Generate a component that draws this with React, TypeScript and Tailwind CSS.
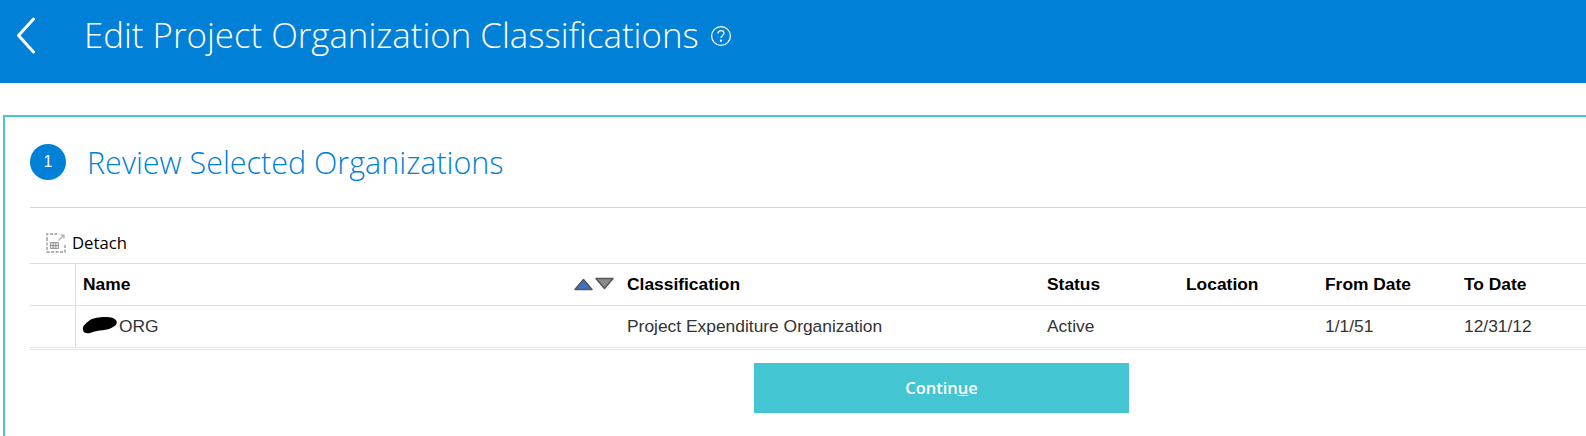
import React from "react";

const cellHead = "text-[17.4px] font-bold text-black";
const cellBody = "text-[17.4px] text-[#333]";
const sans = "font-['Liberation_Sans',Arial,sans-serif]";
const light = "font-['Open_Sans','Noto_Sans',sans-serif]";

const columns = [
  { name: "Classification", value: "Project Expenditure Organization", width: "w-[420px]" },
  { name: "Status", value: "Active", width: "w-[139px]" },
  { name: "Location", value: "", width: "w-[139px]" },
  { name: "From Date", value: "1/1/51", width: "w-[139px]" },
  { name: "To Date", value: "12/31/12", width: "w-[122px]" },
];

const SortIcons = () => (
  <svg width="40" height="14" viewBox="0 0 40 14" className="mr-[13px] shrink-0">
    <path d="M1 12.5 L9.5 2.5 L18 12.5 Z" fill="#4470c4" stroke="#555" strokeWidth="1.5" strokeLinejoin="round" />
    <path d="M22 1.5 L39 1.5 L30.5 11.5 Z" fill="#8b8b8b" stroke="#555" strokeWidth="1.5" strokeLinejoin="round" />
  </svg>
);

const DetachIcon = () => (
  <svg width="20" height="20" viewBox="0 0 20 20" className="shrink-0">
    <path d="M1 7 V1 H11 M19 12 V19 H1 V7" fill="none" stroke="#999" strokeWidth="1.4" strokeDasharray="3 1.5" />
    <path d="M12.5 7.5 L18 2 M14.5 2 H18 V5.5" fill="none" stroke="#aaa" strokeWidth="1.1" />
    <path d="M4.5 9.5 H12.5 V15.5 H4.5 Z M4.5 12.5 H12.5 M7.2 9.5 V15.5 M9.8 9.5 V15.5" fill="#e4e4e4" stroke="#888" strokeWidth="0.8" />
  </svg>
);

export default function App() {
  return (
    <div className="w-[1586px] h-[436px] overflow-hidden bg-white">
      <header className="h-[83px] bg-[#0080d6] flex items-start text-white">
        <svg width="20" height="37" viewBox="0 0 20 37" className="ml-[16px] mt-[17px] shrink-0" fill="none" stroke="white" strokeWidth="3" strokeLinecap="round" strokeLinejoin="round">
          <path d="M17.5 2 L2.5 18.5 L17.5 35" />
        </svg>
        <h1 className={`${light} ml-[48px] mt-[11px] text-[34.85px] leading-[48px] font-light`}>
          Edit Project Organization Classifications
        </h1>
        <svg width="22" height="22" viewBox="0 0 22 22" className="ml-[11px] mt-[25px] shrink-0" fill="none" stroke="white" strokeWidth="1.2">
          <circle cx="11" cy="11" r="9.4" />
          <path d="M8 8.6 C8 6.6 9.4 5.7 11 5.7 C12.7 5.7 14 6.7 14 8.3 C14 10.4 11 10.6 11 13" />
          <circle cx="11" cy="15.6" r="0.6" fill="white" />
        </svg>
      </header>

      <section className="mt-[32px] ml-[3px] h-[321px] border-l-2 border-t-2 border-[#45c6d3] pl-[25px]">
        <div className="h-[90px] flex items-center">
          <div className={`${sans} w-[36px] h-[36px] rounded-full bg-[#0080d6] text-white text-[16px] flex items-center justify-center shrink-0`}>
            1
          </div>
          <h2 className={`${light} ml-[21px] text-[30.5px] font-light text-[#0080d6] leading-[40px] -mt-[1px]`}>
            Review Selected Organizations
          </h2>
        </div>
        <div className="border-t border-[#d5d5d5] h-[56px] flex items-center pl-[16px] pt-[14px]">
          <DetachIcon />
          <span className={`${light} ml-[6px] text-[16.7px] text-black`}>Detach</span>
        </div>

        <div className={`${sans} border-t border-[#d6dfe6]`}>
          <div className="flex h-[42px] items-center border-b border-[#d6dfe6]">
            <div className="w-[46px] h-full border-r border-[#d6dfe6] shrink-0" />
            <div className="w-[551px] pl-[7px] flex items-center justify-between shrink-0">
              <span className={cellHead}>Name</span>
              <SortIcons />
            </div>
            {columns.map((c) => (
              <div key={c.name} className={`${c.width} shrink-0 ${cellHead}`}>
                {c.name}
              </div>
            ))}
          </div>
          <div className="flex h-[41px] items-center">
            <div className="w-[46px] h-full border-r border-[#d6dfe6] shrink-0" />
            <div className="w-[551px] pl-[6px] flex items-center shrink-0">
              <svg width="36" height="18" viewBox="0 0 36 18" className="shrink-0 -mt-[2px]">
                <path d="M1 14 C0 10 4 7 8 4 C13 1 25 0 31 2 C36 4 36 9 31 11 C26 15 15 14 11 16 C6 18 2 18 1 14 Z" fill="#000" />
              </svg>
              <span className={`${cellBody} ml-[1px]`}>ORG</span>
            </div>
            {columns.map((c) => (
              <div key={c.name} className={`${c.width} shrink-0 ${cellBody}`}>
                {c.value}
              </div>
            ))}
          </div>
          <div className="h-[3px] border-y border-[#dfe5ea]" />
        </div>

        <div className="mt-[13px] ml-[724px] w-[375px] h-[50px] bg-[#43c6d2] flex items-center justify-center">
          <span className={`${light} text-white text-[16.5px] font-semibold`}>
            Contin<span className="underline">u</span>e
          </span>
        </div>
      </section>
    </div>
  );
}
